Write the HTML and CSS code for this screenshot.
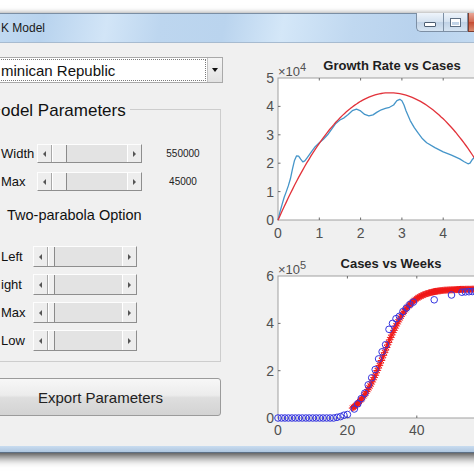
FILE: index.html
```html
<!DOCTYPE html>
<html>
<head>
<meta charset="utf-8">
<title>Model</title>
<link rel="stylesheet" href="styles.css">
</head>
<body>
<div class="screen">
  <div class="window">
    <div class="titlebar">
      <span class="title">K Model</span>
      <div class="caption">
        <span class="cbtn cmin"><i></i></span>
        <span class="cbtn cmax"><i></i></span>
        <span class="cbtn cclose"></span>
      </div>
    </div>
    <div class="client">
      <div class="controls">
        <div class="popup">
          <span class="popup-text">minican Republic</span>
          <span class="popup-arrow"></span>
        </div>
        <fieldset class="panel">
          <legend>odel Parameters</legend>
          <div class="row row-top first">
            <span class="lbl">Width</span>
            <div class="slider"><span class="sb left"></span><span class="thumb"></span><span class="trough"></span><span class="sb right"></span></div>
            <span class="val">550000</span>
          </div>
          <div class="row row-top second">
            <span class="lbl">Max</span>
            <div class="slider"><span class="sb left"></span><span class="thumb"></span><span class="trough"></span><span class="sb right"></span></div>
            <span class="val">45000</span>
          </div>
          <div class="row check-row">
            <span class="check"></span>
            <span class="check-text">Two-parabola Option</span>
          </div>
          <div class="row row-low first-low">
            <span class="lbl">Left</span>
            <div class="slider small"><span class="sb left"></span><span class="thumb"></span><span class="trough"></span><span class="sb right"></span></div>
          </div>
          <div class="row row-low">
            <span class="lbl">ight</span>
            <div class="slider small"><span class="sb left"></span><span class="thumb"></span><span class="trough"></span><span class="sb right"></span></div>
          </div>
          <div class="row row-low">
            <span class="lbl">Max</span>
            <div class="slider small"><span class="sb left"></span><span class="thumb"></span><span class="trough"></span><span class="sb right"></span></div>
          </div>
          <div class="row row-low">
            <span class="lbl">Low</span>
            <div class="slider small"><span class="sb left"></span><span class="thumb"></span><span class="trough"></span><span class="sb right"></span></div>
          </div>
        </fieldset>
        <button class="export">Export Parameters</button>
      </div>
      <div class="plots">
        <svg class="plot plot-top" width="224" height="190" viewBox="0 0 224 190">
          <rect class="axes" x="28" y="28" width="230" height="142"/>
          <g id="growth-data"></g>
          <g class="ticks">
            <path d="M28 141.6h2.5M28 113.2h2.5M28 84.8h2.5M28 56.4h2.5M69.3 170v-2.5M110.6 170v-2.5M151.9 170v-2.5M193.2 170v-2.5M69.3 28v2.5M110.6 28v2.5M151.9 28v2.5M193.2 28v2.5"/>
          </g>
          <g class="ylabels">
            <text x="24" y="175">0</text>
            <text x="24" y="146.6">1</text>
            <text x="24" y="118.2">2</text>
            <text x="24" y="89.8">3</text>
            <text x="24" y="61.4">4</text>
            <text x="24" y="33">5</text>
          </g>
          <g class="xlabels">
            <text x="28" y="188">0</text>
            <text x="69.3" y="188">1</text>
            <text x="110.6" y="188">2</text>
            <text x="151.9" y="188">3</text>
            <text x="193.2" y="188">4</text>
          </g>
          <text class="expo" x="28" y="26">×10<tspan class="sup" dy="-5">4</tspan></text>
          <text class="ptitle" x="142" y="20">Growth Rate vs Cases</text>
        </svg>
        <svg class="plot plot-bottom" width="224" height="200" viewBox="0 0 224 200">
          <rect class="axes" x="28" y="31" width="230" height="142"/>
          <g class="ticks">
            <path d="M28 125.7h2.5M28 78.4h2.5M97.4 173v-2.5M166.8 173v-2.5M97.4 31v2.5M166.8 31v2.5"/>
          </g>
          <g id="cases-data"></g>
          <g class="ylabels">
            <text x="24" y="178">0</text>
            <text x="24" y="130.7">2</text>
            <text x="24" y="83.4">4</text>
            <text x="24" y="36.1">6</text>
          </g>
          <g class="xlabels">
            <text x="28" y="190">0</text>
            <text x="97.4" y="190">20</text>
            <text x="166.8" y="190">40</text>
          </g>
          <text class="expo" x="28" y="29">×10<tspan class="sup" dy="-5">5</tspan></text>
          <text class="ptitle" x="141" y="23">Cases vs Weeks</text>
        </svg>
      </div>
    </div>
    <div class="frame-bottom"></div>
  </div>
</div>
<script src="chart.js"></script>
</body>
</html>
```

FILE: styles.css
```css
body {
  margin: 0;
  background: #ffffff;
}

.screen {
  width: 474px;
  height: 474px;
  overflow: hidden;
  background: #ffffff;
}

.window {
  margin: 13px 0 0 -20px;
  width: 530px;
  border-top: 1px solid #7a8ea4;
  box-shadow: 0 0 5px rgba(0, 0, 0, 0.3), 0 5px 9px rgba(0, 0, 0, 0.6);
  font-family: "Liberation Sans", Arial, sans-serif;
}

.titlebar {
  display: flex;
  height: 28px;
  background: linear-gradient(100deg, #c6ddf3 0%, #b8d3ee 12%, #d2e5f7 24%, #bdd6ef 34%, #bad4ee 46%, #d4e7f8 57%, #c0d8f0 70%, #b8d2ed 82%, #c8def3 100%);
}

.title {
  align-self: center;
  padding-left: 21px;
  font-size: 12px;
  color: #1a1a1a;
}

.caption {
  margin-left: auto;
  margin-top: -1px;
  display: flex;
  height: 19px;
}

.cbtn {
  box-sizing: border-box;
  height: 19px;
  display: flex;
  align-items: center;
  justify-content: center;
  border: 1px solid #7d8fa4;
  border-top: none;
  background: linear-gradient(#eef4fb, #d5e2f0 48%, #c0d2e6 52%, #d6e4f2);
}

.cmin {
  width: 27px;
  border-bottom-left-radius: 5px;
  border-right: none;
}

.cmin i {
  display: block;
  width: 10px;
  height: 3px;
  margin-top: 5px;
  background: #fff;
  border: 1px solid #4d5e72;
  border-radius: 1px;
}

.cmax {
  width: 25px;
}

.cmax i {
  display: block;
  width: 9px;
  height: 7px;
  border: 1px solid #5d6e82;
  box-shadow: inset 0 0 0 1px #fff, inset 0 2px 0 1px #fff;
}

.cclose {
  width: 42px;
  border-color: #7e3d2f;
  background: linear-gradient(#e9a898, #d26a52 48%, #c54c33 52%, #d98c6f);
}

.client {
  display: flex;
  height: 403px;
  background: #f0f0f0;
  border-top: 1px solid #a7bbd0;
}

.controls {
  flex: none;
  width: 243px;
  padding-top: 14px;
  display: flex;
  flex-direction: column;
}

.popup {
  box-sizing: border-box;
  display: flex;
  height: 26px;
  width: 243px;
  border: 1px solid #a9a9a9;
  background: #ffffff;
}

.popup-text {
  flex: 1;
  display: flex;
  align-items: center;
  padding-left: 20px;
  margin: 1px 1px 1px 0;
  border: 1px dotted #7a7a7a;
  border-left: none;
  font-size: 15px;
  color: #111;
}

.popup-arrow {
  flex: none;
  width: 14px;
  display: flex;
  align-items: center;
  justify-content: center;
  border-left: 1px solid #c2c2c2;
  background: linear-gradient(#f5f5f5, #e2e2e2);
}

.popup-arrow::before {
  content: "";
  border-top: 4px solid #111;
  border-left: 3px solid transparent;
  border-right: 3px solid transparent;
}

.panel {
  box-sizing: border-box;
  width: 241px;
  min-width: 0;
  margin: 15px 0 0 0;
  padding: 0 0 10px 0;
  border: 1px solid #cdcdcd;
}

.panel legend {
  margin-left: 20px;
  padding: 4px 4px 0 0;
  font-size: 17px;
  line-height: 18px;
  color: #111;
}

.row {
  display: flex;
  align-items: center;
}

.row-top {
  height: 19px;
}

.row-top.first {
  margin-top: 24px;
}

.row-top.second {
  margin-top: 9px;
}

.row-low {
  height: 21px;
  margin-top: 7px;
}

.row-low.first-low {
  margin-top: 21px;
}

.lbl {
  flex: none;
  box-sizing: border-box;
  padding-left: 20px;
  color: #111;
  white-space: nowrap;
}

.row-top .lbl {
  width: 56px;
  font-size: 13px;
}

.row-low .lbl {
  width: 52px;
  font-size: 13px;
}

.slider {
  flex: none;
  box-sizing: border-box;
  display: flex;
  width: 105px;
  height: 19px;
  background: #e4e4e4;
  border: 1px solid;
  border-color: #fdfdfd #8e8e8e #8e8e8e #fdfdfd;
}

.slider.small {
  width: 104px;
  height: 21px;
}

.sb {
  flex: none;
  width: 13px;
  display: flex;
  align-items: center;
  justify-content: center;
  background: #ededed;
}

.sb.left {
  border-right: 1px solid #a8a8a8;
}

.sb.right {
  border-left: 1px solid #ffffff;
}

.sb.left::before {
  content: "";
  border-top: 3px solid transparent;
  border-bottom: 3px solid transparent;
  border-right: 3px solid #555;
}

.sb.right::before {
  content: "";
  border-top: 3px solid transparent;
  border-bottom: 3px solid transparent;
  border-left: 3px solid #555;
}

.thumb {
  flex: none;
  box-sizing: border-box;
  width: 15px;
  background: #f0f0f0;
  border-left: 1px solid #ffffff;
  border-right: 1px solid #8a8a8a;
}

.slider.small .thumb {
  width: 7px;
}

.trough {
  flex: 1;
  background: #e3e3e3;
}

.val {
  flex: none;
  width: 82px;
  text-align: center;
  font-size: 10px;
  color: #222;
}

.check-row {
  height: 20px;
  margin-top: 14px;
  padding-left: 3px;
}

.check {
  flex: none;
  box-sizing: border-box;
  width: 13px;
  height: 13px;
  margin-right: 10px;
  border: 1px solid #8e8f8f;
  background: linear-gradient(135deg, #dcdcdc, #fdfdfd);
}

.check-text {
  font-size: 14.5px;
  color: #111;
  white-space: nowrap;
}

.export {
  box-sizing: border-box;
  width: 241px;
  height: 38px;
  margin-top: 16px;
  padding: 0;
  border: 1px solid #9b9b9b;
  border-radius: 3px;
  background: linear-gradient(#f7f7f7, #ececec 45%, #dedede 52%, #d3d3d3);
  font-family: "Liberation Sans", Arial, sans-serif;
  font-size: 15px;
  color: #222;
}

.plots {
  flex: none;
  margin-left: 27px;
  padding-top: 7px;
  display: flex;
  flex-direction: column;
}

.plot {
  display: block;
  overflow: hidden;
  font-family: "Liberation Sans", Arial, sans-serif;
}

.plot-bottom {
  margin-top: 5px;
}

.axes {
  fill: #ffffff;
  stroke: #a0a0a0;
  stroke-width: 1;
}

.ticks path {
  stroke: #6a6a6a;
  stroke-width: 1;
  fill: none;
}

.ylabels text {
  font-size: 14px;
  fill: #505050;
  text-anchor: end;
}

.xlabels text {
  font-size: 14px;
  fill: #505050;
  text-anchor: middle;
}

.expo {
  font-size: 13px;
  fill: #505050;
}

.expo .sup {
  font-size: 11px;
}

.ptitle {
  font-size: 13px;
  font-weight: bold;
  fill: #1e1e1e;
  text-anchor: middle;
}

.curve-blue {
  fill: none;
  stroke: #4595c9;
  stroke-width: 1.3;
  stroke-linejoin: round;
}

.curve-red {
  fill: none;
  stroke: #e2323a;
  stroke-width: 1.3;
}

.stars {
  fill: none;
  stroke: #f01818;
  stroke-width: 1;
}

.obs {
  fill: none;
  stroke: #3535e0;
  stroke-width: 1;
}

.frame-bottom {
  height: 6px;
  background: linear-gradient(#c9dcf0, #aec6df);
  border-bottom: 1px solid #5d7086;
}
```

FILE: chart.js
```js
(function () {
  var NS = 'http://www.w3.org/2000/svg';
  function add(parent, tag, attrs) {
    var e = document.createElementNS(NS, tag);
    for (var k in attrs) e.setAttribute(k, attrs[k]);
    parent.appendChild(e);
    return e;
  }
  function f(n) { return n.toFixed(1); }

  /* Growth Rate vs Cases */
  var g1 = document.getElementById('growth-data');
  var gx = function (x) { return 28 + 41.3 * x; };
  var gy = function (y) { return 170 - 28.4 * y; };
  var blue = [[0,0],[0.05,0.3],[0.1,0.55],[0.15,0.8],[0.2,1.0],[0.25,1.2],[0.3,1.45],[0.35,1.8],[0.4,2.1],[0.45,2.26],[0.5,2.25],[0.55,2.14],[0.6,2.05],[0.65,2.08],[0.7,2.18],[0.8,2.38],[0.9,2.58],[1.0,2.72],[1.1,2.84],[1.2,3.0],[1.3,3.2],[1.4,3.4],[1.5,3.52],[1.6,3.6],[1.7,3.72],[1.8,3.85],[1.9,3.9],[2.0,3.84],[2.1,3.72],[2.2,3.67],[2.3,3.7],[2.4,3.8],[2.5,3.88],[2.6,3.93],[2.7,3.97],[2.8,4.05],[2.88,4.2],[2.95,4.25],[3.0,4.2],[3.05,4.05],[3.1,3.85],[3.2,3.5],[3.3,3.25],[3.4,3.05],[3.5,2.86],[3.6,2.72],[3.8,2.55],[4.0,2.4],[4.2,2.28],[4.4,2.15],[4.5,2.06],[4.6,1.98],[4.65,2.0],[4.7,2.12],[4.75,2.2],[4.85,2.25]];
  var bd = blue.map(function (p, i) { return (i ? 'L' : 'M') + f(gx(p[0])) + ' ' + f(gy(p[1])); }).join('');
  var rd = '';
  for (var i = 0; i <= 100; i++) {
    var x = i * 0.05;
    var a = x <= 2.7 ? 0.616 : 0.543;
    var y = 4.48 - a * (x - 2.7) * (x - 2.7);
    rd += (i ? 'L' : 'M') + f(gx(x)) + ' ' + f(gy(y));
  }
  add(g1, 'path', { d: bd, 'class': 'curve-blue' });
  add(g1, 'path', { d: rd, 'class': 'curve-red' });

  /* Cases vs Weeks */
  var g2 = document.getElementById('cases-data');
  var cx = function (w) { return 28 + 3.47 * w; };
  var cy = function (v) { return 173 - 23.65 * v; };
  var star = '';
  for (var w = 21.4; w <= 62; w += 0.3) {
    var v = 5.45 / (1 + Math.exp(-0.27 * (w - 30.6)));
    var px = cx(w), py = cy(v);
    star += 'M' + f(px - 3.5) + ' ' + f(py) + 'h7' +
            'M' + f(px) + ' ' + f(py - 3.5) + 'v7' +
            'M' + f(px - 2.5) + ' ' + f(py - 2.5) + 'l5 5' +
            'M' + f(px - 2.5) + ' ' + f(py + 2.5) + 'l5 -5';
  }
  add(g2, 'path', { d: star, 'class': 'stars' });
  var obs = [];
  for (var k = 0; k <= 16; k++) obs.push([k, 0]);
  obs = obs.concat([[17,0.03],[18,0.06],[19,0.12],[20,0.15],[22,0.38],[23,0.6],[24,0.82],[25,1.05],[26,1.4],[27,1.7],[28,2.05],[29,2.5],[30,2.8],[31,3.1],[32,3.75],[33,4.0],[34,4.2],[35,4.3],[36,4.5],[37,4.65],[38,4.8],[39,4.9],[45,5.0],[50,5.2],[53,5.32],[54,5.33],[55,5.34],[56,5.35],[57,5.35],[58,5.36],[59,5.36],[60,5.37]]);
  obs.forEach(function (p) {
    add(g2, 'circle', { cx: f(cx(p[0])), cy: f(cy(p[1])), r: '3.3', 'class': 'obs' });
  });
})();
```
